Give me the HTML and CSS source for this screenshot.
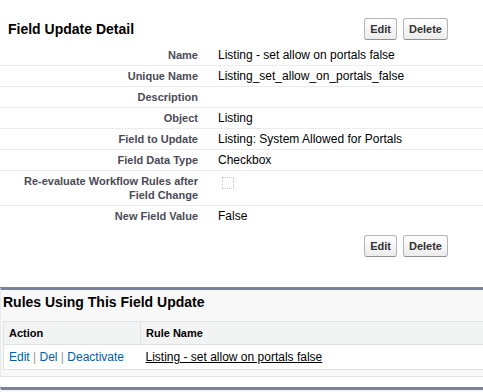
FILE: index.html
```html
<!DOCTYPE html>
<html lang="en">
<head>
  <meta charset="UTF-8" />
  <title>Field Update Detail</title>
  <link rel="stylesheet" href="styles.css">
</head>
<body>
  <div class="detail-block">
    <div class="block-header">
      <h2>Field Update Detail</h2>
      <div class="buttons">
        <button class="btn">Edit</button>
        <button class="btn">Delete</button>
      </div>
    </div>

    <table class="detail-list">
      <tr>
        <td class="label-col">Name</td>
        <td class="data-col">Listing - set allow on portals false</td>
      </tr>
      <tr>
        <td class="label-col">Unique Name</td>
        <td class="data-col">Listing_set_allow_on_portals_false</td>
      </tr>
      <tr>
        <td class="label-col">Description</td>
        <td class="data-col"></td>
      </tr>
      <tr>
        <td class="label-col">Object</td>
        <td class="data-col">Listing</td>
      </tr>
      <tr>
        <td class="label-col">Field to Update</td>
        <td class="data-col">Listing: System Allowed for Portals</td>
      </tr>
      <tr>
        <td class="label-col">Field Data Type</td>
        <td class="data-col">Checkbox</td>
      </tr>
      <tr>
        <td class="label-col">Re-evaluate Workflow Rules after Field Change</td>
        <td class="data-col"><span class="checkbox"></span></td>
      </tr>
      <tr class="last">
        <td class="label-col">New Field Value</td>
        <td class="data-col">False</td>
      </tr>
    </table>

    <div class="block-footer">
      <button class="btn">Edit</button>
      <button class="btn">Delete</button>
    </div>
  </div>

  <div class="related-block">
    <h3>Rules Using This Field Update</h3>
    <table class="related-list">
      <tr class="header-row">
        <th class="action-col">Action</th>
        <th>Rule Name</th>
      </tr>
      <tr class="data-row">
        <td class="action-col">
          <a href="#">Edit</a> <span class="sep">|</span>
          <a href="#">Del</a> <span class="sep">|</span>
          <a href="#">Deactivate</a>
        </td>
        <td><a href="#" class="rule-link">Listing - set allow on portals false</a></td>
      </tr>
    </table>
  </div>

  <div class="related-block next"></div>
</body>
</html>
```

FILE: styles.css
```css
body {
  margin: 0;
  font-family: "Liberation Sans", Arial, sans-serif;
  color: #000;
  background: #fff;
  overflow: hidden;
}
.block-header {
  display: flex;
  align-items: center;
  justify-content: space-between;
  height: 32px;
  padding: 13px 35px 0 8px;
}
.block-header h2 {
  margin: 0;
  font-size: 14px;
  font-weight: bold;
  color: #000;
}
.buttons, .block-footer {
  display: flex;
  gap: 6px;
}
.btn {
  font-family: "Liberation Sans", Arial, sans-serif;
  font-size: 11px;
  font-weight: bold;
  line-height: 14px;
  color: #333;
  padding: 3px 5px;
  border: 1px solid #b5b5b5;
  border-bottom-color: #8f8f8f;
  border-radius: 3px;
  background: linear-gradient(#ffffff, #ececec);
  cursor: pointer;
}
.detail-list {
  width: 100%;
  border-collapse: collapse;
}
.detail-list td {
  border-bottom: 1px solid #ececec;
  padding: 3px 10px;
  line-height: 14px;
  vertical-align: top;
}
.detail-list tr.last td {
  border-bottom: none;
}
.label-col {
  width: 188px;
  text-align: right;
  font-size: 11px;
  font-weight: bold;
  color: #4a4a56;
}
.data-col {
  font-size: 12px;
}
.checkbox {
  display: inline-block;
  width: 10px;
  height: 10px;
  margin: 3px 0 0 4px;
  border: 1px dotted #c8c8c8;
}
.block-footer {
  justify-content: flex-end;
  padding-right: 35px;
  margin-top: 9px;
  margin-bottom: 30px;
}
.related-block {
  border-top: 3px solid #7c8296;
  border-bottom: 1px solid #e3e3e3;
  border-left: 1px solid #eaeaea;
  background: #f8f8f8;
  padding: 0 0 6px 2px;
}
.related-block h3 {
  margin: 0;
  padding: 4px 0 0 0;
  font-size: 14px;
  line-height: 16px;
  font-weight: bold;
  color: #000;
}
.related-list {
  margin-top: 11px;
  width: 100%;
  border-collapse: collapse;
  border: 1px solid #e0e3e5;
  border-right: none;
  background: #fff;
}
.header-row th {
  background: #f2f3f3;
  text-align: left;
  font-size: 11px;
  font-weight: bold;
  color: #000;
  line-height: 14px;
  padding: 4px 5px;
  border-bottom: 1px solid #e0e3e5;
}
.header-row th.action-col {
  border-right: 1px solid #e0e3e5;
}
.action-col {
  width: 126px;
}
.data-row td {
  font-size: 12px;
  line-height: 14px;
  padding: 5px 5px;
}
.data-row a {
  color: #015ba7;
  text-decoration: none;
}
.data-row .sep {
  color: #999;
}
.data-row a.rule-link {
  color: #000;
  text-decoration: underline;
}
.related-block.next {
  margin-top: 10px;
  height: 20px;
  padding: 0;
}
```
